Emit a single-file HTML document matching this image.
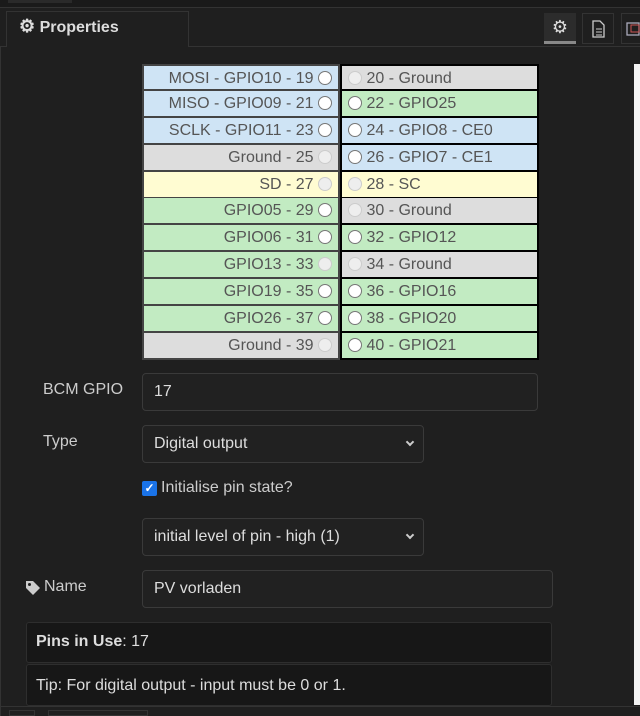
<!DOCTYPE html>
<html><head><style>
*{box-sizing:border-box;margin:0;padding:0}
body{width:640px;height:716px;background:#1f1f1f;font-family:"Liberation Sans",sans-serif;position:relative;overflow:hidden;color:#ccc}
.abs{position:absolute}
.row{position:absolute;left:142px;width:397px;height:27px;font-size:16px;color:#555}
.l,.r{position:absolute;top:0;height:27px;line-height:25px;}
.l{left:0;width:198px;border:2px solid #444;border-top:none;text-align:right;padding-right:6px}
.r{left:198px;width:199px;border:2px solid #000;border-top:none;padding-left:6px}
.rad{display:inline-block;width:14px;height:14px;border-radius:50%;background:#fff;border:1px solid #777;vertical-align:-2px}
.dis{background:#eee;border-color:#ccc}
.b{background:#cfe4f5}.g{background:#dddddd}.gr{background:#c2ebc2}.y{background:#fffcd2}
.inp{position:absolute;border:1px solid #3a3a3a;border-radius:4px;background:#212121;color:#ddd;font-size:16px;padding-left:11px}
.lbl{position:absolute;font-size:16px;color:#ccc}
.chev{position:absolute;right:10px;top:13px;width:6px;height:6px;border-right:2px solid #ccc;border-bottom:2px solid #ccc;transform:rotate(45deg)}
</style></head><body>
<div class="abs" style="left:0;top:0;width:640px;height:8px;background:#1a1a1a;border-bottom:1px solid #333"></div>
<div class="abs" style="left:8px;top:0;width:64px;height:3px;background:#2a2a2a"></div>
<div class="abs" style="left:0;top:46px;width:640px;height:1px;background:#333"></div>
<div class="abs" style="left:6px;top:11px;width:183px;height:36px;background:#1f1f1f;border:1px solid #333;border-bottom:none"></div>
<div class="abs" style="left:19px;top:16px;font-size:16px;font-weight:bold;color:#ddd"><span style="font-size:18px">⚙</span> Properties</div>
<div class="abs" style="left:544px;top:13px;width:32px;height:31px;background:#2c2c2c;border-bottom:3px solid #888;color:#ddd;text-align:center;line-height:29px;font-size:18px">⚙</div>
<div class="abs" style="left:582px;top:13px;width:32px;height:31px;border:1px solid #333">
<svg width="30" height="29"><path d="M10 7h7l4 4v12H10z" fill="none" stroke="#ccc" stroke-width="1.3"/><path d="M13 15h6M13 18h6M13 21h6" stroke="#ccc"/></svg></div>
<div class="abs" style="left:621px;top:13px;width:30px;height:31px;border:1px solid #333">
<svg width="30" height="29"><rect x="5" y="9" width="12" height="12" fill="none" stroke="#aab" stroke-width="1.3"/><rect x="9" y="11" width="8" height="7" fill="none" stroke="#c55"/></svg></div>
<div class="abs" style="left:634px;top:64px;width:6px;height:641px;background:#f4f4f4"></div>
<div class="abs" style="left:0;top:46px;width:1px;height:670px;background:#333"></div>

<div class="row" style="top:64px;height:27px"><div class="l b" style="border-top:2px solid #444">MOSI - GPIO10 - 19 <span class="rad"></span></div><div class="r g" style="border-top:2px solid #000"><span class="rad dis"></span> 20 - Ground</div></div>
<div class="row" style="top:91px"><div class="l b">MISO - GPIO09 - 21 <span class="rad"></span></div><div class="r gr"><span class="rad"></span> 22 - GPIO25</div></div>
<div class="row" style="top:118px"><div class="l b">SCLK - GPIO11 - 23 <span class="rad"></span></div><div class="r b"><span class="rad"></span> 24 - GPIO8 - CE0</div></div>
<div class="row" style="top:145px"><div class="l g">Ground - 25 <span class="rad dis"></span></div><div class="r b"><span class="rad"></span> 26 - GPIO7 - CE1</div></div>
<div class="row" style="top:172px"><div class="l y">SD - 27 <span class="rad dis"></span></div><div class="r y"><span class="rad dis"></span> 28 - SC</div></div>
<div class="row" style="top:198px"><div class="l gr">GPIO05 - 29 <span class="rad"></span></div><div class="r g"><span class="rad dis"></span> 30 - Ground</div></div>
<div class="row" style="top:225px"><div class="l gr">GPIO06 - 31 <span class="rad"></span></div><div class="r gr"><span class="rad"></span> 32 - GPIO12</div></div>
<div class="row" style="top:252px"><div class="l gr">GPIO13 - 33 <span class="rad dis"></span></div><div class="r g"><span class="rad dis"></span> 34 - Ground</div></div>
<div class="row" style="top:279px"><div class="l gr">GPIO19 - 35 <span class="rad"></span></div><div class="r gr"><span class="rad"></span> 36 - GPIO16</div></div>
<div class="row" style="top:306px"><div class="l gr">GPIO26 - 37 <span class="rad"></span></div><div class="r gr"><span class="rad"></span> 38 - GPIO20</div></div>
<div class="row" style="top:333px"><div class="l g">Ground - 39 <span class="rad dis"></span></div><div class="r gr"><span class="rad"></span> 40 - GPIO21</div></div>

<div class="lbl" style="left:43px;top:381px">BCM GPIO</div>
<div class="inp" style="left:142px;top:373px;width:396px;height:38px;line-height:36px">17</div>
<div class="lbl" style="left:43px;top:433px">Type</div>
<div class="inp" style="left:142px;top:425px;width:282px;height:38px;line-height:36px">Digital output<div class="chev"></div></div>
<div class="abs" style="left:142px;top:481px;width:15px;height:15px;background:#1a73e8;border-radius:2px;color:#fff;font-size:12px;line-height:15px;text-align:center;font-weight:bold">✓</div>
<div class="lbl" style="left:161px;top:479px">Initialise pin state?</div>
<div class="inp" style="left:142px;top:518px;width:282px;height:38px;line-height:36px">initial level of pin - high (1)<div class="chev"></div></div>
<svg class="abs" style="left:25px;top:580px" width="16" height="16"><path d="M1 1h7l7 7-7 7-7-7z" fill="#ccc"/><circle cx="4.5" cy="4.5" r="1.5" fill="#1f1f1f"/></svg>
<div class="lbl" style="left:44px;top:578px">Name</div>
<div class="inp" style="left:142px;top:570px;width:411px;height:38px;line-height:36px">PV vorladen</div>
<div class="abs" style="left:26px;top:622px;width:526px;height:41px;background:#171717;border:1px solid #2e2e2e;border-radius:3px;font-size:16px;line-height:38px;padding-left:9px;color:#ddd"><b>Pins in Use</b>: 17</div>
<div class="abs" style="left:26px;top:664px;width:526px;height:42px;background:#171717;border:1px solid #2e2e2e;border-radius:3px;font-size:16px;line-height:42px;padding-left:9px;color:#ddd">Tip: For digital output - input must be 0 or 1.</div>
<div class="abs" style="left:0;top:706px;width:640px;height:1px;background:#333"></div>
<div class="abs" style="left:9px;top:710px;width:26px;height:6px;border:1px solid #333"></div>
<div class="abs" style="left:48px;top:710px;width:100px;height:6px;border:1px solid #333"></div>
</body></html>
